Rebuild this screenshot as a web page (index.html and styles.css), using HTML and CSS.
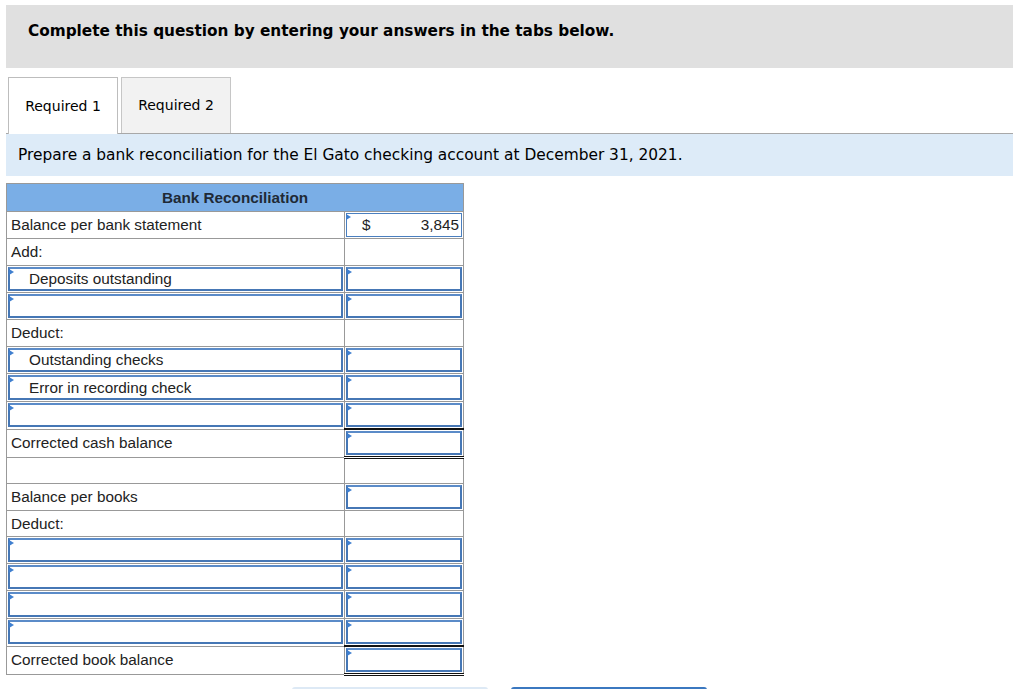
FILE: index.html
```html
<!DOCTYPE html>
<html>
<head>
<meta charset="utf-8">
<link rel="stylesheet" href="styles.css">
</head>
<body>
<div class="page">
  <div class="banner">Complete this question by entering your answers in the tabs below.</div>
  <div class="tabs">
    <div class="tab active">Required 1</div>
    <div class="tab">Required 2</div>
  </div>
  <div class="prompt">Prepare a bank reconciliation for the El Gato checking account at December 31, 2021.</div>
  <table class="recon">
    <tr class="tall"><th colspan="2">Bank Reconciliation</th></tr>
    <tr><td class="lab">Balance per bank statement</td><td class="amt"><div class="box thin"><span class="cur">$</span><span class="val">3,845</span></div></td></tr>
    <tr class="tall"><td class="lab">Add:</td><td></td></tr>
    <tr><td class="inp"><div class="box ind">Deposits outstanding</div></td><td class="amt"><div class="box"></div></td></tr>
    <tr><td class="inp"><div class="box ind"></div></td><td class="amt"><div class="box"></div></td></tr>
    <tr class="tall"><td class="lab">Deduct:</td><td></td></tr>
    <tr><td class="inp"><div class="box ind">Outstanding checks</div></td><td class="amt"><div class="box"></div></td></tr>
    <tr class="tall"><td class="inp"><div class="box ind">Error in recording check</div></td><td class="amt"><div class="box"></div></td></tr>
    <tr><td class="inp"><div class="box ind"></div></td><td class="amt"><div class="box"></div></td></tr>
    <tr><td class="lab">Corrected cash balance</td><td class="amt total"><div class="box"></div></td></tr>
    <tr><td class="lab"></td><td></td></tr>
    <tr><td class="lab">Balance per books</td><td class="amt"><div class="box"></div></td></tr>
    <tr><td class="lab">Deduct:</td><td></td></tr>
    <tr><td class="inp"><div class="box ind"></div></td><td class="amt"><div class="box"></div></td></tr>
    <tr><td class="inp"><div class="box ind"></div></td><td class="amt"><div class="box"></div></td></tr>
    <tr class="tall"><td class="inp"><div class="box ind"></div></td><td class="amt"><div class="box"></div></td></tr>
    <tr><td class="inp"><div class="box ind"></div></td><td class="amt"><div class="box"></div></td></tr>
    <tr><td class="lab">Corrected book balance</td><td class="amt total"><div class="box"></div></td></tr>
  </table>
  <div class="buttons">
    <div class="btn light"></div>
    <div class="btn dark"></div>
  </div>
</div>
</body>
</html>
```
FILE: styles.css
```css
html, body {
  margin: 0;
  padding: 0;
  background: #fff;
}
.page {
  padding: 5px 11px 0 6px;
  font-family: "DejaVu Sans", Verdana, sans-serif;
  color: #000;
}
.banner {
  height: 63px;
  box-sizing: border-box;
  background: #e0e0e0;
  padding-left: 22px;
  display: flex;
  align-items: center;
  font-weight: bold;
  font-size: 15.3px;
  padding-bottom: 12px;
}
.tabs {
  margin-top: 9px;
  display: flex;
  gap: 3px;
  padding-left: 2px;
  border-bottom: 1px solid #a8a8a8;
  height: 56px;
}
.tab {
  width: 110px;
  box-sizing: border-box;
  border: 1px solid #c6c6c6;
  border-bottom: none;
  background: #f2f2f2;
  font-size: 14px;
  display: flex;
  align-items: center;
  justify-content: center;
  padding-bottom: 1px;
}
.tab.active {
  background: #fff;
  border-color: #bdbdbd;
  height: 57px;
  position: relative;
  z-index: 1;
}
.prompt {
  background: #ddebf8;
  height: 42px;
  box-sizing: border-box;
  padding-left: 12px;
  display: flex;
  align-items: center;
  font-size: 15.4px;
}
.recon {
  margin-top: 7px;
  border-collapse: collapse;
  font-family: "Liberation Sans", Arial, sans-serif;
  font-size: 15.3px;
  color: #222;
}
.recon th {
  background: #7aaee6;
  height: 26px;
  font-weight: bold;
  font-size: 15.3px;
  border: 1px solid #999;
  padding: 0;
  color: #1f2a36;
}
.recon td {
  border: 1px solid #999;
  height: 26px;
  padding: 0;
  box-sizing: border-box;
}
.recon tr.tall th,
.recon tr.tall td {
  height: 27px;
}
.recon td.lab {
  width: 338px;
  padding-left: 4px;
}
.recon td.amt, .recon td:last-child {
  width: 119px;
}
.recon td.inp, .recon td.amt {
  padding: 1px;
}
.box {
  position: relative;
  height: 24px;
  box-sizing: border-box;
  border: 2px solid #4677b5;
  border-top-color: #5b8bc8;
  display: flex;
  align-items: center;
}
.recon tr.tall .box {
  height: 25px;
}
.box::before {
  content: "";
  position: absolute;
  left: -1px;
  top: 0;
  border-left: 5px solid #3f7fcf;
  border-top: 3px solid transparent;
  border-bottom: 3px solid transparent;
}
.box.ind {
  padding-left: 19px;
}
.box.thin {
  border-width: 1px;
  border-color: #4a7fbf;
  padding: 0 2px 0 15px;
  justify-content: space-between;
}
.recon td.total {
  border-top: 2px solid #111;
  border-bottom: 3px double #111;
}
.buttons {
  display: flex;
  gap: 23px;
  padding-left: 286px;
  margin-top: 11px;
}
.btn {
  width: 196px;
  height: 20px;
  border-radius: 3px 3px 0 0;
}
.btn.light { background: #dde9f5; }
.btn.dark { background: #3b78c0; }
```
